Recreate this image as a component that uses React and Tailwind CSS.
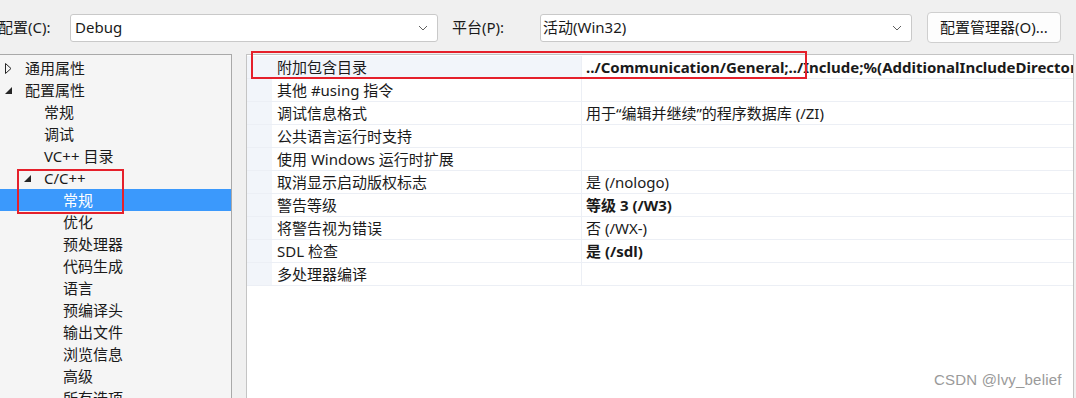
import React from "react";

const F = "font-['Noto_Sans','Noto_Sans_CJK_SC',sans-serif]";

function Chevron() {
  return (
    <svg width="10" height="6" viewBox="0 0 10 6" className="shrink-0">
      <path d="M1 1 L5 5 L9 1" fill="none" stroke="#606060" strokeWidth="1" />
    </svg>
  );
}

function OpenTri() {
  return (
    <svg width="8" height="8" viewBox="0 0 8 8">
      <path d="M7 0 L7 7 L0 7 Z" fill="#262626" />
    </svg>
  );
}

function ClosedTri() {
  return (
    <svg width="7" height="11" viewBox="0 0 7 11">
      <path d="M0.5 0.5 L6 5.5 L0.5 10.5 Z" fill="none" stroke="#262626" strokeWidth="1" />
    </svg>
  );
}

const tree = [
  { t: "通用属性", lv: 0, icon: "closed" },
  { t: "配置属性", lv: 0, icon: "open" },
  { t: "常规", lv: 1 },
  { t: "调试", lv: 1 },
  { t: "VC++ 目录", lv: 1 },
  { t: "C/C++", lv: 1, icon: "open" },
  { t: "常规", lv: 2, sel: true },
  { t: "优化", lv: 2 },
  { t: "预处理器", lv: 2 },
  { t: "代码生成", lv: 2 },
  { t: "语言", lv: 2 },
  { t: "预编译头", lv: 2 },
  { t: "输出文件", lv: 2 },
  { t: "浏览信息", lv: 2 },
  { t: "高级", lv: 2 },
  { t: "所有选项", lv: 2 },
];

const props = [
  { n: "附加包含目录", v: "../Communication/General;../Include;%(AdditionalIncludeDirectories)", b: true, hl: true },
  { n: "其他 #using 指令", v: "" },
  { n: "调试信息格式", v: "用于“编辑并继续”的程序数据库 (/ZI)" },
  { n: "公共语言运行时支持", v: "" },
  { n: "使用 Windows 运行时扩展", v: "" },
  { n: "取消显示启动版权标志", v: "是 (/nologo)" },
  { n: "警告等级", v: "等级 3 (/W3)", b: true },
  { n: "将警告视为错误", v: "否 (/WX-)" },
  { n: "SDL 检查", v: "是 (/sdl)", b: true },
  { n: "多处理器编译", v: "" },
];

export default function App() {
  return (
    <div className={`relative w-[1076px] h-[398px] overflow-hidden bg-[#f0f0f0] text-[15px] text-[#1a1a1a] ${F}`}>
      {/* top bar */}
      <div className="flex items-center h-[54px] pt-[1px]">
        <span className="w-[70px] shrink-0 ml-[-2px] leading-none">配置(C):</span>
        <div className="ml-[2px] w-[368px] h-[28px] bg-white border border-[#c9c9c9] rounded-[3px] flex items-center pl-[4px] pr-[9px]">
          <span className="flex-1 leading-none">Debug</span>
          <Chevron />
        </div>
        <span className="ml-[14px] w-[88px] shrink-0 leading-none">平台(P):</span>
        <div className="w-[372px] h-[28px] bg-white border border-[#c9c9c9] rounded-[3px] flex items-center pl-[2px] pr-[9px]">
          <span className="flex-1 leading-none">活动(Win32)</span>
          <Chevron />
        </div>
        <div className="ml-[15px] w-[134px] h-[31px] bg-[#fdfdfd] border border-[#cfcfcf] rounded-[4px] flex items-center justify-center leading-none">
          配置管理器(O)...
        </div>
      </div>

      {/* main */}
      <div className="flex h-[344px]">
        <div className="w-[232px] shrink-0 bg-[#f5f5f5] border-t border-r border-[#a9a9a9] pt-[2px]">
          {tree.map((r, i) => (
            <div
              key={i}
              className={`h-[22px] flex items-center ${r.sel ? "bg-[#3b99fc] text-white" : ""}`}
            >
              <div
                className={`flex items-center justify-center shrink-0 ${
                  r.lv === 0 ? "w-[25px] pl-[1px]" : r.lv === 1 ? "w-[44px] pl-[19px]" : "w-[63px]"
                }`}
              >
                {r.icon === "open" && (
                  <span className="mt-[2px] mr-[7px] ml-[-1px] flex">
                    <OpenTri />
                  </span>
                )}
                {r.icon === "closed" && (
                  <span className="mr-[9px] flex">
                    <ClosedTri />
                  </span>
                )}
              </div>
              <span className="leading-none whitespace-nowrap">{r.t}</span>
            </div>
          ))}
        </div>

        <div className="w-[14px] shrink-0" />

        <div className="w-[828px] shrink-0 bg-white border-t border-l border-r border-[#c4c4c4] pt-[1px] overflow-hidden">
          {props.map((p, i) => (
            <div key={i} className="flex h-[23px] border-b border-[#eceff5]">
              <div className="w-[25px] shrink-0 bg-[#f2f5fa]" />
              <div
                className={`w-[310px] shrink-0 flex items-center pl-[5px] border-r border-[#eceff5] ${
                  p.hl ? "bg-[#f2f5fa]" : ""
                }`}
              >
                <span className="leading-none whitespace-nowrap">{p.n}</span>
              </div>
              <div className="flex-1 flex items-center pl-[4px] overflow-hidden">
                <span className={`leading-none whitespace-nowrap ${p.b ? "font-bold" : ""}`}>{p.v}</span>
              </div>
            </div>
          ))}
        </div>
      </div>

      {/* red highlight boxes */}
      <div className="absolute left-[17px] top-[169px] w-[107px] h-[45px] border-2 border-[#e5202b]" />
      <div className="absolute left-[251px] top-[51px] w-[556px] h-[28px] border-2 border-[#e5202b]" />

      {/* watermark */}
      <div className="absolute left-[934px] top-[372px] text-[15px] tracking-[0.2px] leading-none text-[#9a9a9a] font-['Liberation_Sans',sans-serif]">
        CSDN @lvy_belief
      </div>
    </div>
  );
}
